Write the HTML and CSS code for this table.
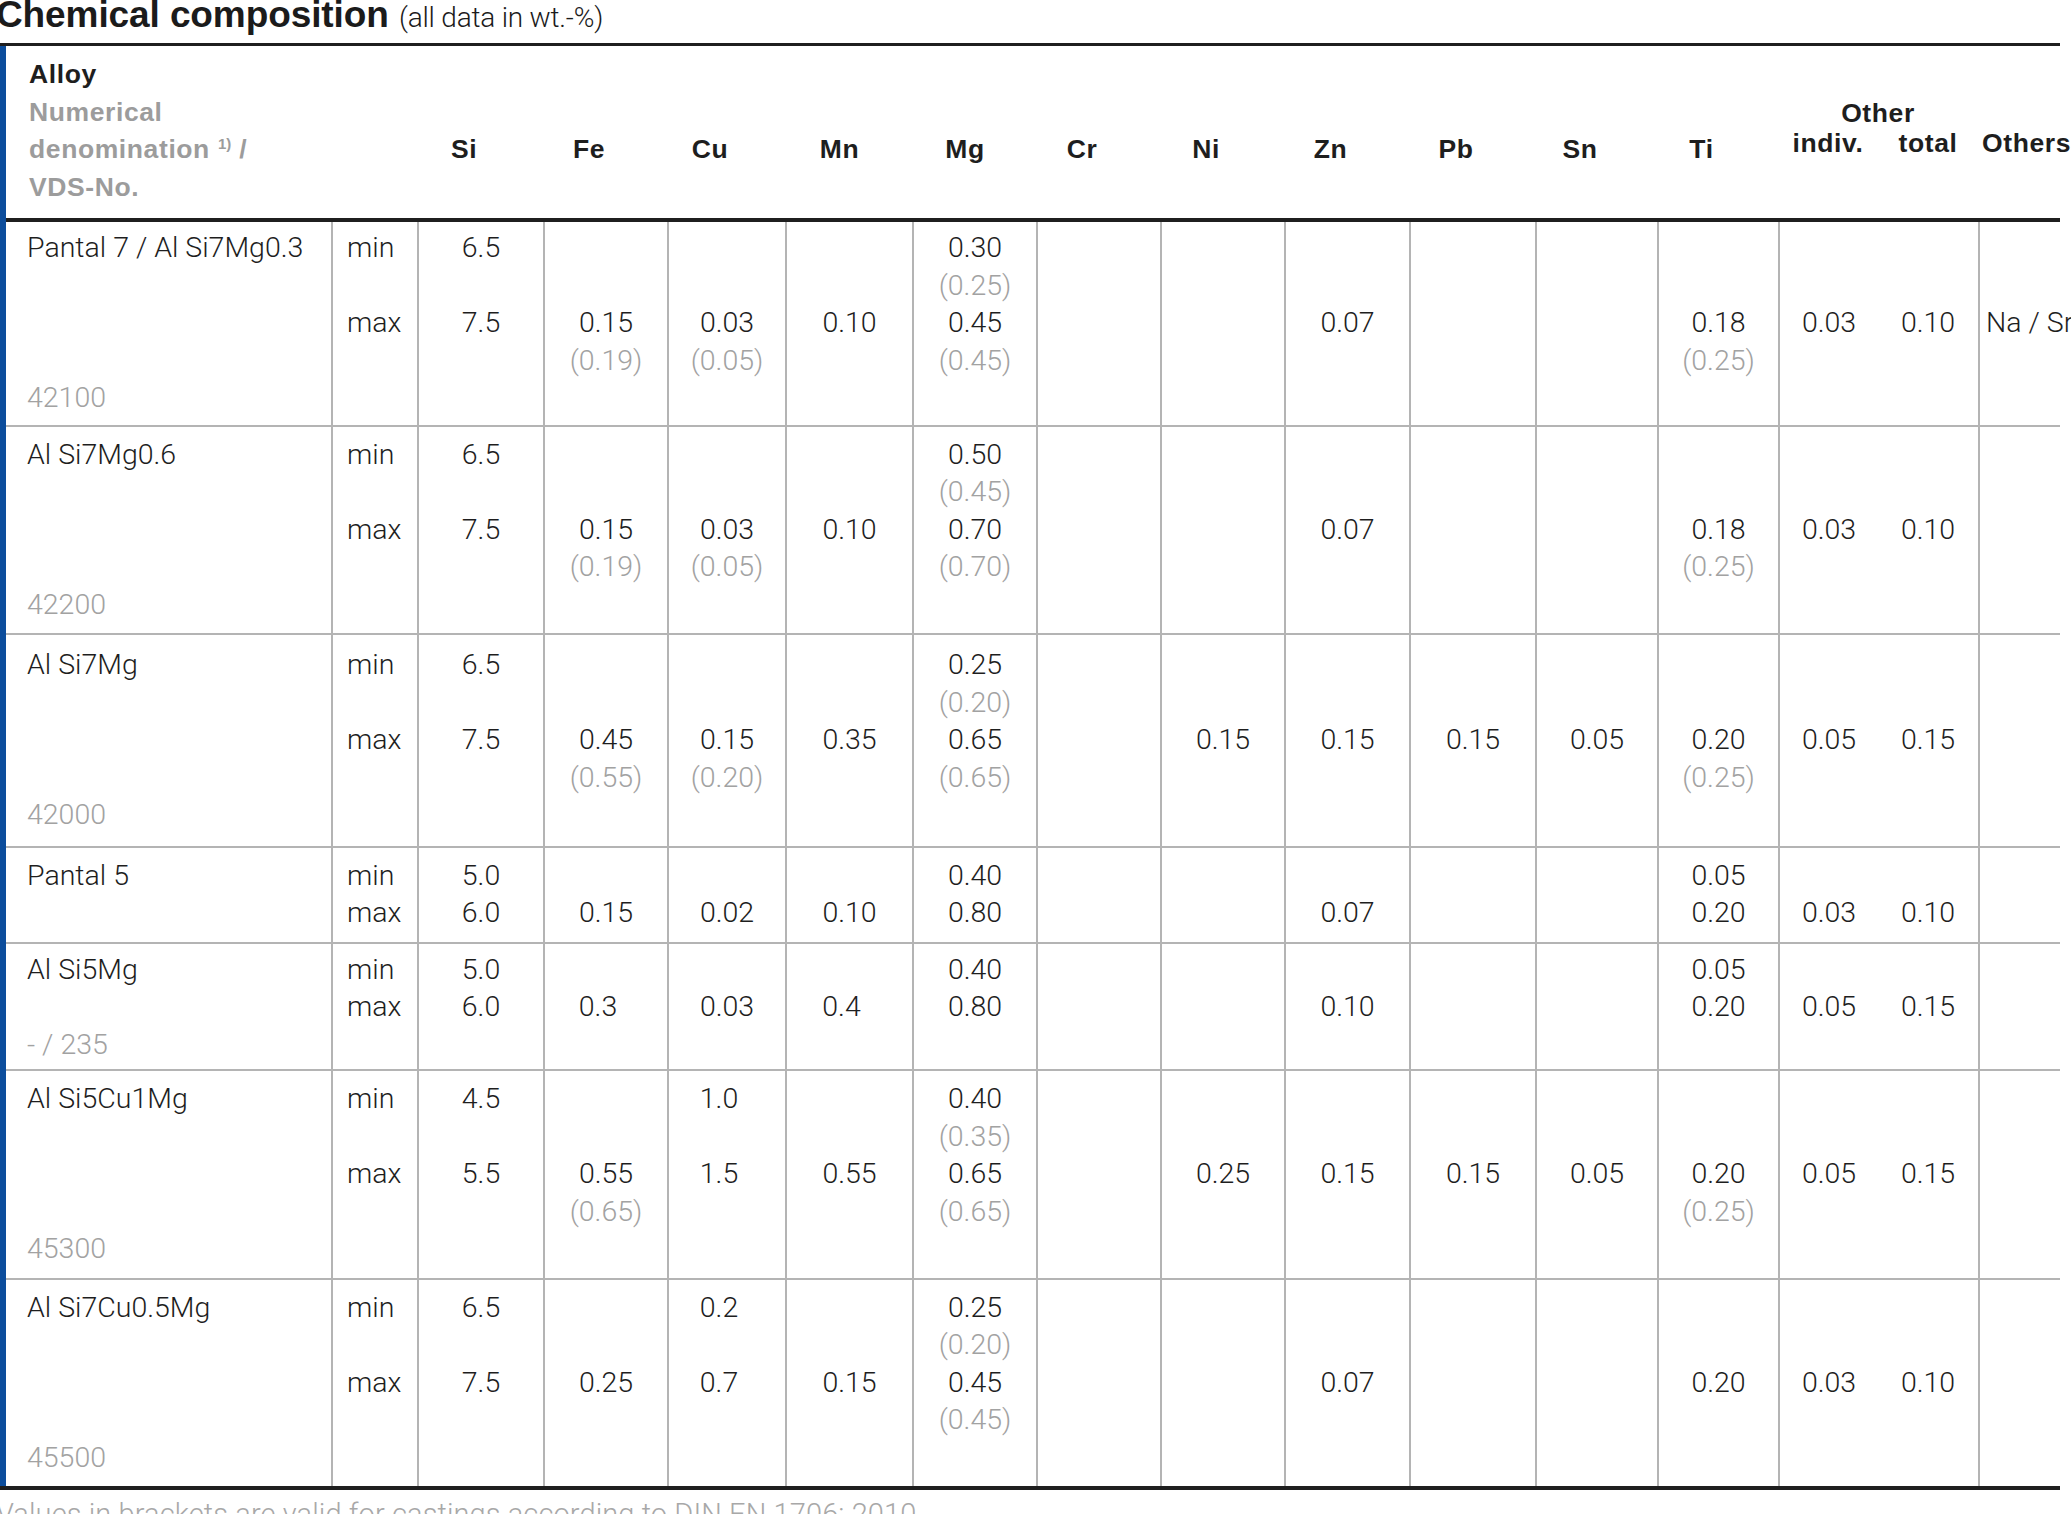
FILE: index.html
```html
<!DOCTYPE html>
<html lang="en">
<head>
<meta charset="utf-8">
<title>Chemical composition</title>
<link rel="stylesheet" href="styles.css">
</head>
<body>
<div class="page">
  <h1 class="title">Chemical composition <span class="sub">(all data in wt.-%)</span></h1>

  <div class="table">
    <div class="inner">
      <div class="thead">
        <div class="th-alloy">
          <p class="dark">Alloy</p>
          <p>Numerical</p>
          <p>denomination <sup class="fn">1)</sup> /</p>
          <p>VDS-No.</p>
        </div>
        <div class="th-el">Si</div>
        <div class="th-el">Fe</div>
        <div class="th-el">Cu</div>
        <div class="th-el near">Mn</div>
        <div class="th-el near">Mg</div>
        <div class="th-el">Cr</div>
        <div class="th-el">Ni</div>
        <div class="th-el">Zn</div>
        <div class="th-el">Pb</div>
        <div class="th-el">Sn</div>
        <div class="th-el">Ti</div>
        <div class="th-other">
          <p>Other</p>
          <div class="th-sub"><span>indiv.</span><span>total</span></div>
        </div>
        <div class="th-others">Others</div>
      </div>

      <div class="row short">
        <div class="c name"><p>Pantal 7 / Al Si7Mg0.3</p><p class="vds s3">42100</p></div>
        <div class="c mm"><p>min</p><p class="s1">max</p></div>
        <div class="c"><p>6.5</p><p class="s1">7.5</p></div>
        <div class="c"><p class="s2">0.15</p><p class="b">(0.19)</p></div>
        <div class="c"><p class="s2">0.03</p><p class="b">(0.05)</p></div>
        <div class="c"><p class="s2">0.10</p></div>
        <div class="c"><p>0.30</p><p class="b">(0.25)</p><p>0.45</p><p class="b">(0.45)</p></div>
        <div class="c"></div>
        <div class="c"></div>
        <div class="c"><p class="s2">0.07</p></div>
        <div class="c"></div>
        <div class="c"></div>
        <div class="c"><p class="s2">0.18</p><p class="b">(0.25)</p></div>
        <div class="c"><p class="s2">0.03</p></div>
        <div class="c tot"><p class="s2">0.10</p></div>
        <div class="c oth"><p class="s2">Na / Sr</p></div>
      </div>

      <div class="row">
        <div class="c name"><p>Al Si7Mg0.6</p><p class="vds s3">42200</p></div>
        <div class="c mm"><p>min</p><p class="s1">max</p></div>
        <div class="c"><p>6.5</p><p class="s1">7.5</p></div>
        <div class="c"><p class="s2">0.15</p><p class="b">(0.19)</p></div>
        <div class="c"><p class="s2">0.03</p><p class="b">(0.05)</p></div>
        <div class="c"><p class="s2">0.10</p></div>
        <div class="c"><p>0.50</p><p class="b">(0.45)</p><p>0.70</p><p class="b">(0.70)</p></div>
        <div class="c"></div>
        <div class="c"></div>
        <div class="c"><p class="s2">0.07</p></div>
        <div class="c"></div>
        <div class="c"></div>
        <div class="c"><p class="s2">0.18</p><p class="b">(0.25)</p></div>
        <div class="c"><p class="s2">0.03</p></div>
        <div class="c tot"><p class="s2">0.10</p></div>
        <div class="c oth"></div>
      </div>

      <div class="row tall">
        <div class="c name"><p>Al Si7Mg</p><p class="vds s3">42000</p></div>
        <div class="c mm"><p>min</p><p class="s1">max</p></div>
        <div class="c"><p>6.5</p><p class="s1">7.5</p></div>
        <div class="c"><p class="s2">0.45</p><p class="b">(0.55)</p></div>
        <div class="c"><p class="s2">0.15</p><p class="b">(0.20)</p></div>
        <div class="c"><p class="s2">0.35</p></div>
        <div class="c"><p>0.25</p><p class="b">(0.20)</p><p>0.65</p><p class="b">(0.65)</p></div>
        <div class="c"></div>
        <div class="c"><p class="s2">0.15</p></div>
        <div class="c"><p class="s2">0.15</p></div>
        <div class="c"><p class="s2">0.15</p></div>
        <div class="c"><p class="s2">0.05</p></div>
        <div class="c"><p class="s2">0.20</p><p class="b">(0.25)</p></div>
        <div class="c"><p class="s2">0.05</p></div>
        <div class="c tot"><p class="s2">0.15</p></div>
        <div class="c oth"></div>
      </div>

      <div class="row">
        <div class="c name"><p>Pantal 5</p></div>
        <div class="c mm"><p>min</p><p>max</p></div>
        <div class="c"><p>5.0</p><p>6.0</p></div>
        <div class="c"><p class="s1">0.15</p></div>
        <div class="c"><p class="s1">0.02</p></div>
        <div class="c"><p class="s1">0.10</p></div>
        <div class="c"><p>0.40</p><p>0.80</p></div>
        <div class="c"></div>
        <div class="c"></div>
        <div class="c"><p class="s1">0.07</p></div>
        <div class="c"></div>
        <div class="c"></div>
        <div class="c"><p>0.05</p><p>0.20</p></div>
        <div class="c"><p class="s1">0.03</p></div>
        <div class="c tot"><p class="s1">0.10</p></div>
        <div class="c oth"></div>
      </div>

      <div class="row tight">
        <div class="c name"><p>Al Si5Mg</p><p class="vds s1">- / 235</p></div>
        <div class="c mm"><p>min</p><p>max</p></div>
        <div class="c"><p>5.0</p><p>6.0</p></div>
        <div class="c"><p class="s1 sh">0.3</p></div>
        <div class="c"><p class="s1">0.03</p></div>
        <div class="c"><p class="s1 sh">0.4</p></div>
        <div class="c"><p>0.40</p><p>0.80</p></div>
        <div class="c"></div>
        <div class="c"></div>
        <div class="c"><p class="s1">0.10</p></div>
        <div class="c"></div>
        <div class="c"></div>
        <div class="c"><p>0.05</p><p>0.20</p></div>
        <div class="c"><p class="s1">0.05</p></div>
        <div class="c tot"><p class="s1">0.15</p></div>
        <div class="c oth"></div>
      </div>

      <div class="row">
        <div class="c name"><p>Al Si5Cu1Mg</p><p class="vds s3">45300</p></div>
        <div class="c mm"><p>min</p><p class="s1">max</p></div>
        <div class="c"><p>4.5</p><p class="s1">5.5</p></div>
        <div class="c"><p class="s2">0.55</p><p class="b">(0.65)</p></div>
        <div class="c"><p class="sh">1.0</p><p class="s1 sh">1.5</p></div>
        <div class="c"><p class="s2">0.55</p></div>
        <div class="c"><p>0.40</p><p class="b">(0.35)</p><p>0.65</p><p class="b">(0.65)</p></div>
        <div class="c"></div>
        <div class="c"><p class="s2">0.25</p></div>
        <div class="c"><p class="s2">0.15</p></div>
        <div class="c"><p class="s2">0.15</p></div>
        <div class="c"><p class="s2">0.05</p></div>
        <div class="c"><p class="s2">0.20</p><p class="b">(0.25)</p></div>
        <div class="c"><p class="s2">0.05</p></div>
        <div class="c tot"><p class="s2">0.15</p></div>
        <div class="c oth"></div>
      </div>

      <div class="row">
        <div class="c name"><p>Al Si7Cu0.5Mg</p><p class="vds s3">45500</p></div>
        <div class="c mm"><p>min</p><p class="s1">max</p></div>
        <div class="c"><p>6.5</p><p class="s1">7.5</p></div>
        <div class="c"><p class="s2">0.25</p></div>
        <div class="c"><p class="sh">0.2</p><p class="s1 sh">0.7</p></div>
        <div class="c"><p class="s2">0.15</p></div>
        <div class="c"><p>0.25</p><p class="b">(0.20)</p><p>0.45</p><p class="b">(0.45)</p></div>
        <div class="c"></div>
        <div class="c"></div>
        <div class="c"><p class="s2">0.07</p></div>
        <div class="c"></div>
        <div class="c"></div>
        <div class="c"><p class="s2">0.20</p></div>
        <div class="c"><p class="s2">0.03</p></div>
        <div class="c tot"><p class="s2">0.10</p></div>
        <div class="c oth"></div>
      </div>
    </div>
  </div>

  <p class="note">Values in brackets are valid for castings according to DIN EN 1706: 2010</p>
</div>
</body>
</html>
```

FILE: styles.css
```css
html, body {
  margin: 0;
  padding: 0;
  background: #ffffff;
  overflow: hidden;
}

body {
  width: 2071px;
  height: 1514px;
  color: #1e1e1e;
  font-family: "Liberation Sans", Arial, sans-serif;
}

.page {
  --cols: 325px 86px 126px 124px 118px 127px 124px 124px 124px 125px 126px 122px 121px 100px 100px 82px;
  --lh: 37.5px;
  width: 2071px;
}

.title {
  margin: 0 0 0 -4px;
  height: 43px;
  line-height: 30px;
  font-family: "Liberation Sans", Arial, sans-serif;
  font-weight: 700;
  font-size: 37px;
  letter-spacing: -0.1px;
  white-space: nowrap;
  color: #1b1b1b;
}

.title .sub {
  font-family: Roboto, "Liberation Sans", sans-serif;
  font-weight: 300;
  font-size: 28px;
  letter-spacing: -0.2px;
}

.table {
  width: 2060px;
  border-top: 3px solid #1f1f1f;
  border-bottom: 4px solid #1f1f1f;
}

.inner {
  border-left: 6px solid #0c4d9c;
}

/* ---------- header ---------- */
.thead {
  display: grid;
  grid-template-columns: var(--cols);
  border-bottom: 4px solid #1f1f1f;
  font-family: "Liberation Sans", Arial, sans-serif;
  font-weight: 700;
  font-size: 26.5px;
  letter-spacing: 0.6px;
  color: #1e1e1e;
}

.thead p {
  margin: 0;
}

.th-alloy {
  grid-column: span 2;
  padding: 10px 0 12px 23px;
  line-height: var(--lh);
  color: #9c9c9c;
  white-space: nowrap;
}

.th-alloy .dark {
  color: #1e1e1e;
}

.fn {
  font-size: 15px;
  line-height: 0;
  vertical-align: 9px;
  letter-spacing: 0;
}

.th-el {
  padding: 85px 32px 0 0;
  line-height: var(--lh);
  text-align: center;
}

.th-el.near {
  padding-right: 18px;
}

.th-other {
  grid-column: span 2;
  padding-top: 52px;
  line-height: 30px;
  text-align: center;
}

.th-sub {
  display: grid;
  grid-template-columns: 1fr 1fr;
}

.th-others {
  padding: 82px 0 0 4px;
  line-height: 30px;
  white-space: nowrap;
}

/* ---------- body rows ---------- */
.row {
  --pt: 9px;
  --pb: 10px;
  display: grid;
  grid-template-columns: var(--cols);
  border-bottom: 2px solid #b4b4b4;
  font-family: Roboto, "Liberation Sans", sans-serif;
  font-weight: 300;
  font-size: 28.5px;
  color: #1e1e1e;
}

.row:last-child {
  border-bottom: 0;
}

.row.short {
  --pt: 7px;
  --pb: 8px;
}

.row.tall {
  --pt: 11px;
  --pb: 12px;
}

.row.tight {
  --pt: 7px;
  --pb: 6px;
}

.c {
  border-left: 2px solid #b4b4b4;
  padding: var(--pt) 0 var(--pb);
  line-height: var(--lh);
  text-align: center;
  white-space: nowrap;
}

.c p {
  margin: 0;
}

.c.name {
  border-left: 0;
  padding-left: 21px;
  text-align: left;
}

.c.mm {
  padding-left: 14px;
  text-align: left;
}

.c.tot {
  border-left: 0;
}

.c.oth {
  padding-left: 6px;
  text-align: left;
}

.s1 { margin-top: var(--lh) !important; }
.s2 { margin-top: calc(var(--lh) * 2) !important; }
.s3 { margin-top: calc(var(--lh) * 3) !important; }

.sh {
  padding-right: 16px;
}

.b,
.vds {
  color: #a2a2a2;
}

.note {
  margin: 6px 0 0 -4px;
  font-family: Roboto, "Liberation Sans", sans-serif;
  font-weight: 300;
  font-size: 29px;
  letter-spacing: 0.1px;
  line-height: var(--lh);
  color: #a8a8a8;
  white-space: nowrap;
}
```
